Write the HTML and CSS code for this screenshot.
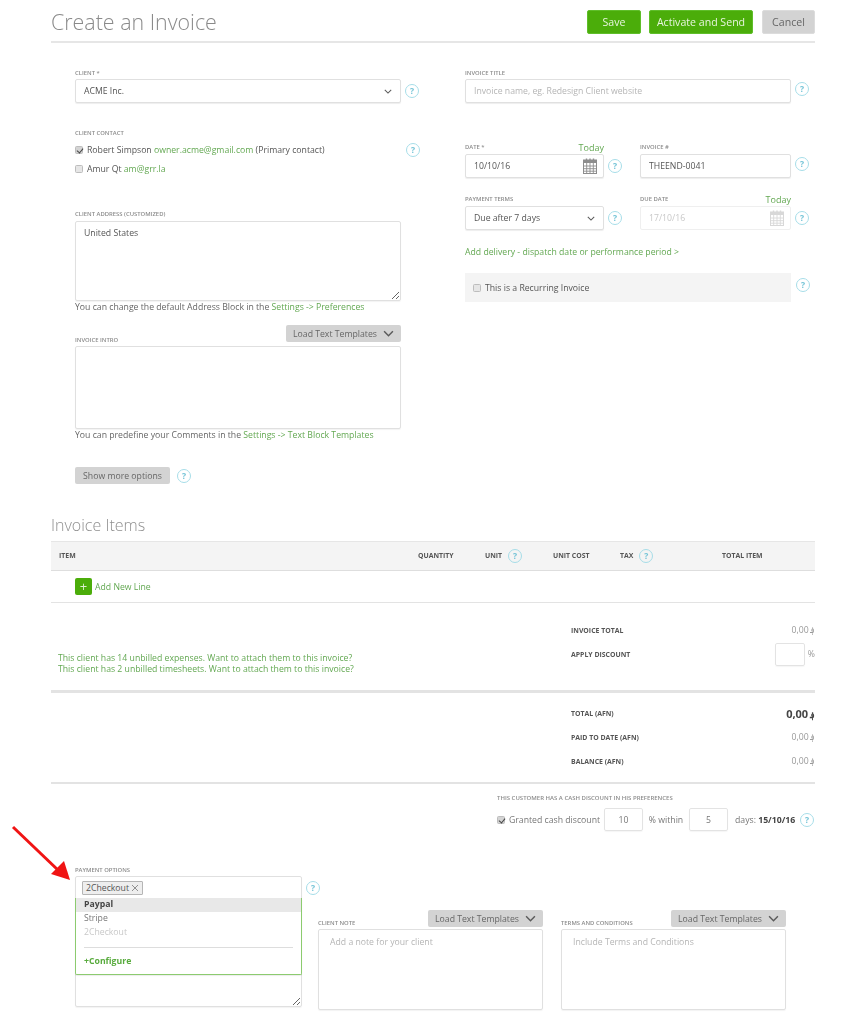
FILE: index.html
```html
<!DOCTYPE html>
<html lang="en">
<head>
<meta charset="utf-8">
<title>Create an Invoice</title>
<link rel="stylesheet" href="styles.css">
</head>
<body>
<svg width="0" height="0" class="defs">
  <symbol id="chev" viewBox="0 0 10 6"><path d="M1 1l4 4 4-4" fill="none" stroke="#5a5a5a" stroke-width="1.3"/></symbol>
  <symbol id="cal" viewBox="0 0 14 16"><path d="M3.5 0.5v3M7 0.5v3M10.5 0.5v3" stroke="currentColor" stroke-width="1.4"/><rect x="0.5" y="2" width="13" height="13.5" fill="none" stroke="currentColor"/><rect x="0.5" y="2" width="13" height="3" fill="currentColor"/><path d="M0.5 8h13M0.5 10.7h13M0.5 13.2h13M3.7 5v10M7 5v10M10.3 5v10" stroke="currentColor" stroke-width="0.9"/></symbol>
</svg>
<main class="page">
  <header class="top">
    <h1 class="title">Create an Invoice</h1>
    <div class="actions">
      <button class="btn green save">Save</button>
      <button class="btn green send">Activate and Send</button>
      <button class="btn grey cancel">Cancel</button>
    </div>
  </header>

  <section class="form">
    <div class="col">
      <div class="field">
        <label class="lbl">Client *</label>
        <div class="line">
          <div class="ctl sel wide"><span>ACME Inc.</span><svg class="chev"><use href="#chev"/></svg></div>
          <span class="help">?</span>
        </div>
      </div>
      <div class="field contact">
        <label class="lbl">Client contact</label>
        <div class="line wideline">
          <div class="contact-row"><input type="checkbox" class="chk" checked><span>Robert Simpson <a class="lnk">owner.acme@gmail.com</a> (Primary contact)</span></div>
          <span class="help">?</span>
        </div>
        <div class="contact-row"><input type="checkbox" class="chk"><span>Amur Qt <a class="lnk">am@grr.la</a></span></div>
      </div>
      <div class="field address">
        <label class="lbl">Client address (customized)</label>
        <textarea class="area addr">United States</textarea>
        <p class="hint">You can change the default Address Block in the <a class="lnk">Settings -&gt; Preferences</a></p>
      </div>
      <div class="field intro">
        <div class="labelbar introbar">
          <label class="lbl flat">Invoice intro</label>
          <button class="btn grey tpl">Load Text Templates <svg class="tplchev"><use href="#chev"/></svg></button>
        </div>
        <div class="area introbox"></div>
        <p class="hint">You can predefine your Comments in the <a class="lnk">Settings -&gt; Text Block Templates</a></p>
      </div>
      <div class="more">
        <button class="btn grey morebtn">Show more options</button>
        <span class="help">?</span>
      </div>
    </div>

    <div class="col right">
      <div class="field">
        <label class="lbl">Invoice title</label>
        <div class="line">
          <input class="ctl wide" placeholder="Invoice name, eg. Redesign Client website">
          <span class="help up">?</span>
        </div>
      </div>
      <div class="pair first">
        <div class="cell">
          <div class="lblbar"><label class="lbl flat">Date *</label><a class="lnk today">Today</a></div>
          <div class="line">
            <div class="ctl small"><span>10/10/16</span><svg class="cal"><use href="#cal"/></svg></div>
            <span class="help">?</span>
          </div>
        </div>
        <div class="cell">
          <div class="lblbar"><label class="lbl flat">Invoice #</label></div>
          <div class="line">
            <div class="ctl mid"><span>THEEND-0041</span></div>
            <span class="help up">?</span>
          </div>
        </div>
      </div>
      <div class="pair second">
        <div class="cell">
          <div class="lblbar"><label class="lbl flat">Payment terms</label></div>
          <div class="line">
            <div class="ctl sel small"><span>Due after 7 days</span><svg class="chev"><use href="#chev"/></svg></div>
            <span class="help">?</span>
          </div>
        </div>
        <div class="cell">
          <div class="lblbar"><label class="lbl flat">Due date</label><a class="lnk today">Today</a></div>
          <div class="line">
            <div class="ctl mid off"><span>17/10/16</span><svg class="cal light"><use href="#cal"/></svg></div>
            <span class="help">?</span>
          </div>
        </div>
      </div>
      <a class="lnk delivery">Add delivery - dispatch date or performance period &gt;</a>
      <div class="line recurring-line">
        <div class="recurring"><input type="checkbox" class="chk"> This is a Recurring Invoice</div>
        <span class="help">?</span>
      </div>
    </div>
  </section>

  <h2 class="subtitle">Invoice Items</h2>
  <div class="thead">
    <span>Item</span>
    <span>Quantity</span>
    <span class="withhelp">Unit <span class="help">?</span></span>
    <span>Unit cost</span>
    <span class="withhelp">Tax <span class="help">?</span></span>
    <span>Total item</span>
  </div>
  <div class="addline"><span class="plus">+</span><a class="lnk">Add New Line</a></div>

  <section class="summary">
    <div class="notes">
      <a class="lnk">This client has 14 unbilled expenses. Want to attach them to this invoice?</a>
      <a class="lnk">This client has 2 unbilled timesheets. Want to attach them to this invoice?</a>
    </div>
    <div class="sums">
      <div class="sum"><b>Invoice total</b><span>0,00 <i class="cur">؋</i></span></div>
      <div class="sum"><b>Apply discount</b><span class="disc"><span class="box"></span> %</span></div>
    </div>
  </section>

  <section class="totals">
    <div class="sums">
      <div class="sum big"><b>Total (AFN)</b><span>0,00 <i class="cur">؋</i></span></div>
      <div class="sum"><b>Paid to date (AFN)</b><span>0,00 <i class="cur">؋</i></span></div>
      <div class="sum"><b>Balance (AFN)</b><span>0,00 <i class="cur">؋</i></span></div>
    </div>
  </section>

  <section class="cash">
    <label class="lbl cashlbl">This customer has a cash discount in his preferences</label>
    <div class="cashrow">
      <input type="checkbox" class="chk" checked>
      <span class="cashtext">Granted cash discount</span>
      <span class="box num">10</span>
      <span class="within">% within</span>
      <span class="box num">5</span>
      <span class="days">days: <b>15/10/16</b></span>
      <span class="help">?</span>
    </div>
  </section>

  <section class="bottom">
    <div class="pay">
      <label class="lbl">Payment options</label>
      <div class="payline">
        <div class="paybox">
          <textarea class="area payarea"></textarea>
          <span class="tag">2Checkout <svg class="x" viewBox="0 0 8 8"><path d="M1 1l6 6M7 1l-6 6" stroke="#777" stroke-width=".8"/></svg></span>
          <div class="drop">
            <div class="opt active">Paypal</div>
            <div class="opt">Stripe</div>
            <div class="opt used">2Checkout</div>
            <hr class="rule">
            <a class="cfg">+Configure</a>
          </div>
        </div>
        <span class="help">?</span>
      </div>
    </div>
    <div class="note">
      <div class="labelbar"><label class="lbl flat">Client note</label><button class="btn grey tpl">Load Text Templates <svg class="tplchev"><use href="#chev"/></svg></button></div>
      <textarea class="area notearea" placeholder="Add a note for your client"></textarea>
    </div>
    <div class="note">
      <div class="labelbar"><label class="lbl flat">Terms and conditions</label><button class="btn grey tpl">Load Text Templates <svg class="tplchev"><use href="#chev"/></svg></button></div>
      <textarea class="area notearea" placeholder="Include Terms and Conditions"></textarea>
    </div>
  </section>

  <svg class="arrow" viewBox="0 0 70 70" width="70" height="70">
    <path d="M2 2L48 46" stroke="#f01414" stroke-width="3" fill="none"/>
    <polygon points="59,55 40,49 53,36" fill="#f01414"/>
  </svg>
</main>
</body>
</html>
```

FILE: styles.css
```css
* { box-sizing: border-box; }
html, body { margin: 0; padding: 0; background: #fff; }
body {
  font-family: "Open Sans", "Liberation Sans", sans-serif;
  font-size: 8.7px;
  color: #555;
  overflow: hidden;
  height: 1024px;
}
.defs { position: absolute; }
.page {
  position: relative;
  width: 845px;
  padding: 0 30px 0 51px;
  filter: blur(0.45px);
}
.top {
  display: flex;
  justify-content: space-between;
  height: 43px;
  padding-top: 10px;
  border-bottom: 2px solid #e6e6e6;
}
.title {
  margin: 0;
  font-weight: 300;
  font-size: 21.4px;
  line-height: 24px;
  color: #8a8a8a;
}
.actions { display: flex; gap: 8px; height: 24px; }
.btn {
  border: 0;
  border-radius: 2px;
  font: inherit;
  padding: 0;
  display: inline-flex;
  align-items: center;
  justify-content: center;
}
.green { background: #4bad0a; color: #e8f5df; font-size: 10.6px; border: 1px solid #5fbe2a; }
.grey { background: #d3d3d3; color: #666; }
.save { width: 54px; }
.send { width: 104px; }
.cancel { width: 53px; margin-left: 1px; font-size: 10.6px; border: 1px solid #dcdcdc; }

.form { display: flex; padding: 26px 0 0 24px; }
.col { width: 390px; }
.col.right { width: 350px; }
.lbl {
  display: block;
  height: 8px;
  line-height: 8px;
  margin-bottom: 2px;
  font-size: 5.9px;
  text-transform: uppercase;
  color: #8c8c8c;
  font-weight: 600;
  white-space: nowrap;
}
.lbl.flat { margin-bottom: 0; }
.line { display: flex; align-items: center; gap: 4px; }
.ctl {
  display: flex;
  align-items: center;
  justify-content: space-between;
  height: 24px;
  padding: 0 8px;
  border: 1px solid #e0e0e0;
  border-radius: 2px;
  background: #fff;
  font: inherit;
  color: #555;
  box-shadow: 0 1px 1px rgba(0,0,0,.07);
}
.ctl::placeholder, .area::placeholder { color: #b5b5b5; opacity: 1; }
.wide { width: 326px; }
.small { width: 139px; }
.mid { width: 151px; }
.off { color: #c8c8c8; border-color: #efefef; box-shadow: none; }
.chev { width: 8px; height: 5px; }
.cal { width: 14px; height: 16px; color: #8d8d8d; margin-right: -2px; }
.cal.light { color: #d8d8d8; }
.help {
  flex: none;
  display: inline-block;
  width: 14px;
  height: 14px;
  border: 1.3px solid #a6dde8;
  border-radius: 50%;
  color: #72c3d6;
  font-size: 8.5px;
  font-weight: 700;
  line-height: 11.5px;
  text-align: center;
}
.help.up { position: relative; top: -2px; }
.lnk { color: #63a852; }

.contact { margin-top: 26px; }
.contact .lbl { margin-bottom: 3px; }
.wideline { width: 345px; justify-content: space-between; }
.contact-row { display: flex; align-items: center; gap: 4px; height: 19px; white-space: nowrap; }
.chk {
  appearance: none;
  position: relative;
  width: 8px;
  height: 8px;
  margin: 0;
  flex: none;
  background: #e6e6e6;
  border: 1px solid #bdbdbd;
  border-radius: 1.5px;
}
.chk:checked { background: #d4d4d4; }
.chk:checked::after {
  content: "";
  position: absolute;
  left: 1.5px;
  top: 0;
  width: 3px;
  height: 5px;
  border: solid #444;
  border-width: 0 1.4px 1.4px 0;
  transform: rotate(40deg);
}
.address { margin-top: 32px; }
.address .lbl { margin-bottom: 3px; }
.area {
  display: block;
  width: 326px;
  padding: 5px 8px;
  border: 1px solid #e0e0e0;
  border-radius: 2px;
  background: #fff;
  font: inherit;
  color: #555;
  box-shadow: 0 1px 1px rgba(0,0,0,.05);
}
.addr { height: 80px; }
.hint { margin: 0; height: 10px; line-height: 12px; color: #666; white-space: nowrap; }
.intro { margin-top: 14px; }
.labelbar {
  display: flex;
  justify-content: space-between;
  align-items: flex-end;
  height: 21px;
}
.introbar { width: 326px; }
.labelbar .lbl { height: 9px; margin-bottom: 1px; }
.tpl { align-self: flex-start; flex: none; width: 115px; height: 17px; gap: 6px; }
.tplchev { width: 11px; height: 7px; }
.introbox { height: 83px; }
.more { display: flex; align-items: center; gap: 7px; margin-top: 28px; }
.morebtn { width: 95px; height: 17px; }

.right .field { height: 60px; }
.pair { display: flex; gap: 18px; }
.first { margin-top: 15px; }
.second { margin-top: 18px; }
.cell:first-child { width: 157px; }
.lblbar {
  display: flex;
  justify-content: space-between;
  align-items: center;
  width: 139px;
  height: 8px;
  margin-bottom: 2px;
  position: relative;
  top: -1px;
}
.cell:nth-child(2) .lblbar { width: 151px; }
.today { font-size: 9px; }
.delivery { display: block; margin-top: 17px; line-height: 11px; }
.recurring-line { margin-top: 15px; gap: 5px; align-items: flex-start; }
.recurring {
  display: flex;
  align-items: center;
  gap: 4px;
  width: 326px;
  height: 29px;
  padding-left: 8px;
  background: #f4f4f4;
}
.recurring-line .help { margin-top: 5px; }

.subtitle {
  margin: 29px 0 0;
  height: 28px;
  line-height: 24px;
  font-size: 16px;
  font-weight: 300;
  color: #8f8f8f;
}
.thead {
  display: grid;
  grid-template-columns: 359px 67px 68px 67px 102px 1fr;
  align-items: center;
  height: 30px;
  padding: 0 0 1px 8px;
  background: #f4f4f4;
  border-top: 1px solid #e6e6e6;
  border-bottom: 1px solid #dedede;
  font-size: 6.9px;
  font-weight: 700;
  text-transform: uppercase;
  color: #555;
}
.withhelp { display: flex; align-items: center; gap: 6px; }
.addline {
  display: flex;
  align-items: center;
  gap: 3px;
  height: 32px;
  padding-left: 24px;
  border-bottom: 1px solid #e3e3e3;
}
.plus {
  width: 17px;
  height: 17px;
  border-radius: 2px;
  background: #4bad0a;
  color: #dff0d2;
  font-size: 13px;
  line-height: 16px;
  text-align: center;
}
.summary {
  display: flex;
  justify-content: space-between;
  padding: 15px 0 15px;
  border-bottom: 3px solid #e3e3e3;
}
.notes { display: flex; flex-direction: column; padding: 35px 0 0 7px; line-height: 11px; }
.sums { width: 244px; }
.sum {
  display: flex;
  justify-content: space-between;
  align-items: center;
  height: 24px;
  color: #999;
}
.sum b { font-size: 6.9px; text-transform: uppercase; color: #555; }
.cur { font-style: normal; font-size: 8px; margin-left: -1px; }
.big span { font-size: 11px; font-weight: 700; color: #444; }
.disc { display: flex; align-items: center; gap: 3px; }
.box {
  display: inline-flex;
  align-items: center;
  justify-content: center;
  width: 30px;
  height: 23px;
  border: 1px solid #e3e3e3;
  border-radius: 2px;
  box-shadow: 0 1px 1px rgba(0,0,0,.04);
}
.totals {
  display: flex;
  justify-content: flex-end;
  padding: 8px 0 9px;
  border-bottom: 2px solid #e3e3e3;
}
.cash { margin-left: 446px; padding-top: 10px; }
.cashlbl { margin-bottom: 6px; font-size: 6px; }
.cashrow { display: flex; align-items: center; height: 23px; white-space: nowrap; color: #777; }
.cashtext { margin-left: 4px; width: 95px; }
.num { width: 39px; flex: none; }
.within { width: 46px; text-align: center; }
.days { margin-left: 7px; margin-right: 3px; width: 62px; }
.days b { color: #444; }

.bottom { display: flex; margin: 35px 0 0 24px; }
.pay { width: 243px; }
.pay .lbl { margin-bottom: 2px; }
.payline { display: flex; gap: 4px; align-items: flex-start; }
.payline .help { margin-top: 5px; }
.paybox { position: relative; width: 227px; }
.payarea { width: 227px; height: 131px; }
.tag {
  position: absolute;
  left: 7px;
  top: 5px;
  display: flex;
  align-items: center;
  gap: 2px;
  height: 14px;
  padding: 0 3px;
  background: #eee;
  border: 1px solid #b5b5b5;
  border-radius: 1px;
}
.x { width: 8px; height: 8px; }
.drop {
  position: absolute;
  left: 0;
  top: 22px;
  width: 227px;
  height: 77px;
  border: 1.5px solid #8ccb6f;
  border-top: 0;
  border-radius: 0 0 2px 2px;
  background: #fff;
  box-shadow: 0 1px 1px rgba(0,0,0,.08);
}
.opt { height: 13.8px; line-height: 13.8px; padding-left: 8px; color: #777; }
.opt.active { background: #e8e8e8; color: #444; font-weight: 700; }
.opt.used { color: #c8c8c8; }
.rule { margin: 8px 8px 7px; border: 0; border-top: 1px solid #ddd; }
.cfg { display: block; padding-left: 8px; color: #58ab3d; font-weight: 700; }
.note { width: 225px; margin: 44px 18px 0 0; }
.note .lbl { margin-bottom: 3px; }
.notearea { width: 225px; height: 81px; margin-top: -2px; padding: 6px 11px; resize: none; }
.arrow { position: absolute; left: 11px; top: 825px; }
```
